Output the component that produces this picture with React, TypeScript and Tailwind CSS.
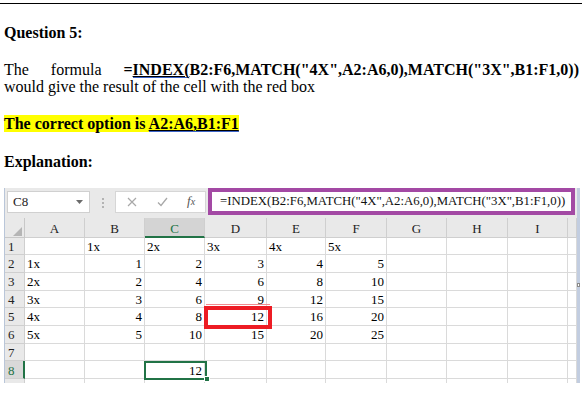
import React from "react";

const data: string[][] = [
  ["", "1x", "2x", "3x", "4x", "5x"],
  ["1x", "1", "2", "3", "4", "5"],
  ["2x", "2", "4", "6", "8", "10"],
  ["3x", "3", "6", "9", "12", "15"],
  ["4x", "4", "8", "12", "16", "20"],
  ["5x", "5", "10", "15", "20", "25"],
  [],
  ["", "", "12"],
  [],
];

const colLetters = ["A", "B", "C", "D", "E", "F", "G", "H", "I", ""];

function Sheet() {
  const cells: React.ReactNode[] = [];
  cells.push(
    <div key="corner" className="relative h-[20px] bg-[#e9e9e9] border-r border-b border-[#c8c8c8]">
      <svg className="absolute left-0 top-0" width="20" height="20" viewBox="0 0 20 20">
        <polygon points="17,9 17,18 8,18" fill="#b5b5b5" />
      </svg>
    </div>
  );
  colLetters.forEach((l, i) => {
    const sel = l === "C";
    cells.push(
      <div
        key={"h" + i}
        className={
          sel
            ? "h-[20px] flex items-center justify-center pt-[3px] bg-[#d4d4d4] text-[#217346] border-r border-[#cfcfcf] border-b-2 border-b-[#217346] text-[13px] leading-[15px]"
            : "h-[20px] flex items-center justify-center pt-[3px] bg-[#e9e9e9] text-[#222] border-r border-b border-[#cfcfcf] text-[13px] leading-[15px]"
        }
      >
        {l}
      </div>
    );
  });
  data.forEach((row, r) => {
    const sel = r === 7;
    cells.push(
      <div
        key={"r" + r}
        className={
          sel
            ? "h-[17.7px] flex items-end pl-[3px] pb-[0.5px] bg-[#d9d9d9] text-[#217346] border-b border-[#cfcfcf] border-r-2 border-r-[#217346] text-[13px] leading-[15px]"
            : "h-[17.7px] flex items-end pl-[3px] pb-[0.5px] bg-[#e9e9e9] text-[#222] border-b border-r border-[#cfcfcf] text-[13px] leading-[15px]"
        }
      >
        {r < 8 ? r + 1 : ""}
      </div>
    );
    for (let c = 0; c < 10; c++) {
      const v = row[c] ?? "";
      const isNum = /^\d+$/.test(v);
      cells.push(
        <div
          key={"c" + r + "-" + c}
          className={
            isNum
              ? "h-[17.7px] flex items-end justify-end pr-[2px] pb-[0.5px] border-r border-b border-[#dadada] text-[13px] leading-[15px] text-black"
              : "h-[17.7px] flex items-end pl-[2px] pb-[0.5px] border-r border-b border-[#dadada] text-[13px] leading-[15px] text-black"
          }
        >
          {v}
        </div>
      );
    }
  });

  return (
    <div className="relative mt-[17px] ml-[4px] w-[576px] h-[195px] overflow-hidden bg-white flex">
      <div className="w-px bg-[#b9c6d9]" />
      <div className="w-[572px] flex flex-col">
        {/* toolbar */}
        <div className="h-[30px] shrink-0 bg-[#e9e9e9] flex items-start">
          <div className="ml-[2px] mt-[3px] w-[83px] h-[22px] bg-white border border-[#d0d0d0] flex items-center justify-between pl-[5px] pr-[6px]">
            <span className="text-[13px] leading-[15px] text-[#222]">C8</span>
            <svg width="7" height="4" viewBox="0 0 7 4">
              <polygon points="0,0 7,0 3.5,4" fill="#6b6b6b" />
            </svg>
          </div>
          <div className="ml-[12px] mt-[10px] flex flex-col gap-[2px]">
            <div className="w-[2px] h-[2px] bg-[#b3b3b3]" />
            <div className="w-[2px] h-[2px] bg-[#b3b3b3]" />
            <div className="w-[2px] h-[2px] bg-[#b3b3b3]" />
          </div>
          <div className="ml-[11px] mt-[3px] w-[91px] h-[22px] bg-white border border-[#d6d6d6] flex items-center">
            <svg className="ml-[11px]" width="10" height="10" viewBox="0 0 10 10">
              <path d="M1 1 L9 9 M9 1 L1 9" stroke="#a8a8a8" strokeWidth="1.2" fill="none" />
            </svg>
            <svg className="ml-[20px]" width="11" height="10" viewBox="0 0 11 10">
              <path d="M1 5.5 L4 8.5 L10 1" stroke="#a8a8a8" strokeWidth="1.3" fill="none" />
            </svg>
            <span className="ml-[19px] italic text-[13px] leading-[14px] text-[#555]">
              f<span className="text-[10px]">x</span>
            </span>
          </div>
          <div className="ml-[2px] w-[367px] h-[27px] border-[4px] border-[#a349a4] bg-white flex items-center pl-[8px] overflow-hidden">
            <span className="text-[12.8px] leading-[15px] text-[#111] whitespace-nowrap">
              =INDEX(B2:F6,MATCH("4X",A2:A6,0),MATCH("3X",B1:F1,0))
            </span>
          </div>
        </div>
        {/* grid */}
        <div className="grid grid-cols-[20px_60px_60px_60px_62px_59px_61px_60px_61px_60px_9px] content-start">
          {cells}
        </div>
      </div>
      <div className="w-[3px] bg-[#c2cde0] relative">
        <div className="absolute left-0 top-[95px] w-[3px] h-[4px] border border-[#8a8a8a] bg-white" />
      </div>

      {/* red box */}
      <div className="absolute left-[200px] top-[118px] w-[68px] h-[23px] border-[4px] border-[#ed1c24]" />
      <div className="absolute left-[202px] top-[116.5px] w-[64px] h-px bg-[#f28b8f]" />
      {/* selected cell */}
      <div className="absolute left-[140px] top-[173px] w-[63px] h-[19px] border-2 border-[#217346]" />
      <div className="absolute left-[200px] top-[188px] w-[6px] h-[6px] bg-[#217346] border border-white" />
    </div>
  );
}

export default function App() {
  return (
    <div className="w-[588px] h-[405px] overflow-hidden bg-white text-black font-['Liberation_Serif',serif]">
      <div className="pt-[3px]">
        <div className="h-px w-[582px] bg-black" />
      </div>
      <div className="pl-[4px] w-[579px] text-[16px] leading-[17.7px]">
        <p className="mt-[20px] font-bold">Question 5:</p>
        <p className="mt-[19px] text-justify">
          The formula{" "}
          <b>
            =
            <span className="underline decoration-1 bg-[linear-gradient(#3a63c8,#3a63c8)] bg-no-repeat bg-[length:100%_1.5px] bg-[position:0_16px]">
              INDEX(
            </span>
            B2:F6,MATCH("4X",A2:A6,0),MATCH("3X",B1:F1,0))
          </b>{" "}
          would give the result of the cell with the red box
        </p>
        <p className="mt-[19px] font-bold">
          <span className="bg-[#ffff00]">
            The correct option is{" "}
            <span className="underline decoration-1 bg-[linear-gradient(#3a63c8,#3a63c8)] bg-no-repeat bg-[length:100%_1.5px] bg-[position:0_16px]">
              A2:A6,B1:F1
            </span>
          </span>
        </p>
        <p className="mt-[20px] font-bold">Explanation:</p>
      </div>
      <Sheet />
    </div>
  );
}
